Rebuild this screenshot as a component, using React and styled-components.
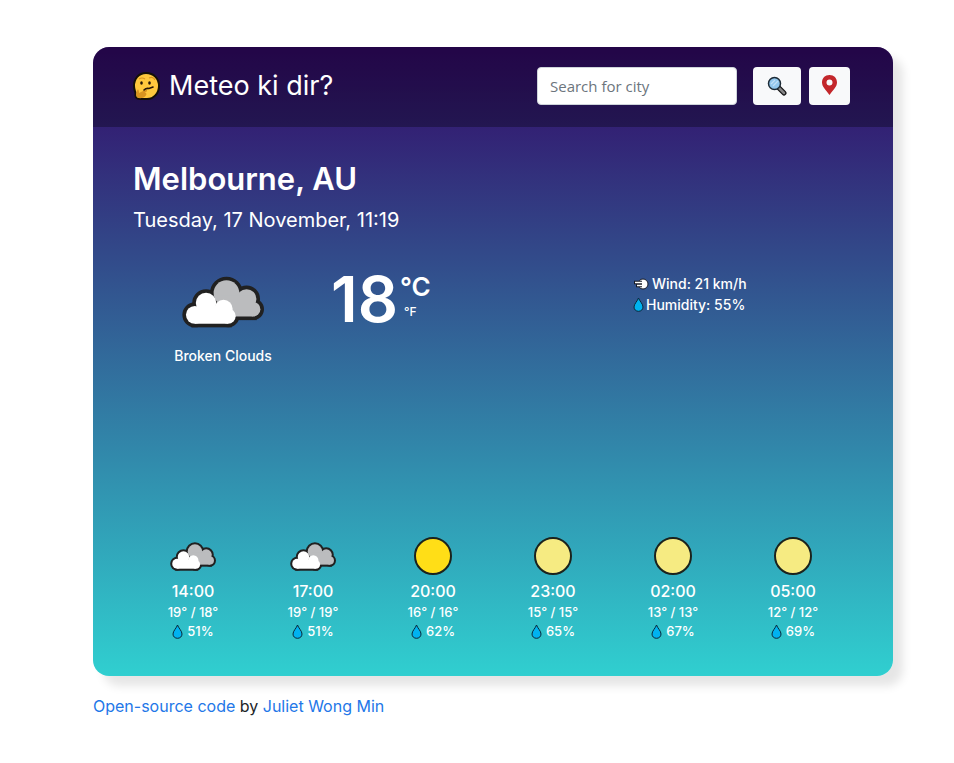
import React from "react";
import styled, { createGlobalStyle } from "styled-components";

const GlobalStyle = createGlobalStyle`
  *, *::before, *::after { box-sizing: border-box; }
  body {
    margin: 0;
    background: #fff;
    color: #212529;
    font-family: Inter, "Liberation Sans", sans-serif;
    font-size: 16px;
    line-height: 24px;
  }
  h1, h2, p, ul { margin: 0; padding: 0; }
`;

const Page = styled.div`
  max-width: 954px;
  padding: 47px 61px 40px 93px;
`;

const Card = styled.main`
  border-radius: 16px;
  overflow: hidden;
  color: #fff;
  background: linear-gradient(to top, #30cfd0 0%, #330867 100%);
  box-shadow: 10px 10px 10px rgba(0, 0, 0, 0.1);
`;

const Header = styled.header`
  display: flex;
  align-items: center;
  justify-content: space-between;
  gap: 24px;
  padding: 20px 43px 22px 38px;
  background: rgba(0, 0, 0, 0.3);
`;

const Brand = styled.h1`
  display: flex;
  align-items: center;
  gap: 8px;
  font-size: 27px;
  font-weight: 400;
  line-height: 38px;
  white-space: nowrap;
`;

const SearchForm = styled.form`
  display: flex;
  gap: 8px;
`;

const SearchInput = styled.input`
  width: 200px;
  height: 38px;
  margin-right: 8px;
  padding: 6px 12px;
  border: 1px solid #ced4da;
  border-radius: 4px;
  background: #fff;
  color: #495057;
  font: 400 15px/24px "Open Sans", "Noto Sans", sans-serif;
  &::placeholder { color: #6c757d; opacity: 1; }
`;

const IconButton = styled.button`
  display: flex;
  align-items: center;
  justify-content: center;
  height: 38px;
  padding: 0 ${(p) => (p.$wide ? 14 : 12)}px;
  border: 0;
  border-radius: 4px;
  background: #f8f9fa;
  cursor: pointer;
`;

const Content = styled.div`
  padding: 32px 40px 35px;
`;

const City = styled.h2`
  font-size: 31px;
  font-weight: 600;
  line-height: 40px;
`;

const DateLine = styled.p`
  margin-top: 8px;
  font-size: 20px;
  line-height: 26px;
`;

const Current = styled.section`
  display: grid;
  grid-template-columns: 3fr 5fr 4fr;
  margin-top: 34px;
`;

const Condition = styled.div`
  display: flex;
  flex-direction: column;
  align-items: center;
  gap: 16px;
  padding-top: 9px;
  font-size: 14px;
  font-weight: 500;
`;

const Temperature = styled.div`
  display: flex;
  align-items: flex-start;
  gap: 2px;
  padding-left: 18px;
`;

const Degrees = styled.strong`
  font-size: 63px;
  font-weight: 600;
  line-height: 64px;
`;

const Units = styled.div`
  display: flex;
  flex-direction: column;
  align-items: flex-start;
  padding-top: 4px;
`;

const UnitButton = styled.button`
  padding: 0 ${(p) => (p.$active ? 0 : 4)}px;
  border: 0;
  background: none;
  color: #fff;
  font-family: inherit;
  font-size: ${(p) => (p.$active ? 26 : 12)}px;
  font-weight: ${(p) => (p.$active ? 600 : 500)};
  line-height: ${(p) => (p.$active ? 32 : 18)}px;
  cursor: pointer;
`;

const Details = styled.ul`
  padding: 6px 0 0 20px;
  list-style: none;
  font-size: 14px;
  font-weight: 500;
  line-height: 21px;
`;

const Detail = styled.li`
  display: flex;
  align-items: center;
  gap: ${(p) => p.$gap}px;
  white-space: nowrap;
`;

const Forecast = styled.ul`
  display: grid;
  grid-template-columns: repeat(6, 1fr);
  margin-top: 165px;
  list-style: none;
`;

const Slot = styled.li`
  display: flex;
  flex-direction: column;
  align-items: center;
  font-size: 13px;
  font-weight: 500;
  line-height: 19px;
`;

const SlotIcon = styled.div`
  display: flex;
  align-items: center;
  height: 46px;
`;

const Time = styled.time`
  font-size: 16px;
  line-height: 24px;
`;

const Humidity = styled.p`
  display: flex;
  align-items: center;
  gap: 4px;
`;

const Footer = styled.footer`
  margin-top: 18px;
`;

const Link = styled.a`
  color: #2377e8;
  text-decoration: none;
  &:hover { text-decoration: underline; }
`;

function BackCloud(props) {
  return (
    <g {...props}>
      <circle cx="197" cy="82" r="39" />
      <circle cx="258" cy="100" r="30" />
      <circle cx="278" cy="131" r="22" />
      <rect x="180" y="90" width="98" height="63" />
    </g>
  );
}

function FrontCloud(props) {
  return (
    <g {...props}>
      <circle cx="101" cy="148" r="27" />
      <circle cx="135" cy="112" r="31" />
      <circle cx="188" cy="130" r="28" />
      <circle cx="202" cy="152" r="23" />
      <rect x="101" y="125" width="101" height="50" />
    </g>
  );
}

function Clouds({ width, height }) {
  return (
    <svg width={width} height={height} viewBox="62 31 249 156" aria-hidden="true">
      <BackCloud fill="#212121" stroke="#212121" strokeWidth="22" />
      <FrontCloud fill="#212121" stroke="#212121" strokeWidth="22" />
      <BackCloud fill="#bbbcbe" />
      <FrontCloud fill="#fff" />
    </svg>
  );
}

function Sun({ color }) {
  return (
    <svg width="40" height="40" viewBox="0 0 40 40" aria-hidden="true">
      <circle cx="20" cy="20" r="18" fill={color} stroke="#1b231d" strokeWidth="2" />
    </svg>
  );
}

function Drop() {
  return (
    <svg width="11" height="15" viewBox="0 0 11 15" aria-hidden="true">
      <path d="M5.5 1C4.5 4 1 7 1 10C1 12.600 3 14.300 5.500 14.300S10 12.600 10 10C10 7 6.500 4 5.500 1Z" fill="#00b2f0" stroke="#09283a" strokeWidth="1" />
    </svg>
  );
}

function WindIcon() {
  return (
    <svg width="16" height="14" viewBox="0 0 16 14" aria-hidden="true">
      <circle cx="10" cy="7" r="5" fill="#fff" stroke="#171b27" strokeWidth="1" />
      <path d="M1 5.500H9M3 8.500H9" stroke="#171b27" strokeWidth="3.500" />
      <path d="M2 5.500H10M4 8.500H10" stroke="#fff" strokeWidth="1.500" />
    </svg>
  );
}

function ThinkingFace() {
  return (
    <svg width="30" height="30" viewBox="0 0 28 30" aria-hidden="true">
      <path d="M14 2C6.500 2 2 8 2 15C2 18 3 20 3.500 22C3 26 4 28 8 28H15C22 28 27 22 27 15S22 2 14 2Z" fill="#ffc83d" stroke="#151007" strokeWidth="2" />
      <path d="M5 20C6 17 7 19 7 22L13 19C16 18 16 21 12 22C16 21 15 26 10 27C4 28 3 24 5 20Z" fill="#d99520" />
      <path d="M7 8Q10 6 13 8M17 7Q21 5 23 9" fill="none" stroke="#d99520" strokeWidth="1.200" />
      <ellipse cx="9.500" cy="12" rx="1.300" ry="1.800" fill="#251507" />
      <ellipse cx="17.500" cy="12" rx="1.300" ry="1.800" fill="#251507" />
      <path d="M12 19Q14 17 17 17.500L21 16" fill="none" stroke="#251507" strokeWidth="1.600" strokeLinecap="round" />
    </svg>
  );
}

function Magnifier() {
  return (
    <svg width="20" height="20" viewBox="0 0 20 20" aria-hidden="true">
      <path d="M11.500 11.500L17 17" stroke="#141414" strokeWidth="5" strokeLinecap="round" />
      <path d="M12 12L17 17" stroke="#858585" strokeWidth="2.500" strokeLinecap="round" />
      <circle cx="7.500" cy="7.500" r="6" fill="#92c8ef" stroke="#1d2b36" strokeWidth="1.500" />
      <path d="M4 8L8 4M6 10L11 5" stroke="#c2e0f7" strokeWidth="1.200" />
    </svg>
  );
}

function Pin() {
  return (
    <svg width="17" height="24" viewBox="0 0 17 24" aria-hidden="true">
      <path fillRule="evenodd" d="M8.500 1C4 1 1 4 1 8.500C1 13 5 16 8.500 21C12 16 16 13 16 8.500C16 4 13 1 8.500 1ZM8.500 5.500A3 3 0 1 1 8.500 11.500A3 3 0 1 1 8.500 5.500Z" fill="#c3272b" />
    </svg>
  );
}

const forecast = [
  { time: "14:00", temp: "19° / 18°", humidity: "51%", sky: "clouds" },
  { time: "17:00", temp: "19° / 19°", humidity: "51%", sky: "clouds" },
  { time: "20:00", temp: "16° / 16°", humidity: "62%", sky: "day" },
  { time: "23:00", temp: "15° / 15°", humidity: "65%", sky: "night" },
  { time: "02:00", temp: "13° / 13°", humidity: "67%", sky: "night" },
  { time: "05:00", temp: "12° / 12°", humidity: "69%", sky: "night" },
];

export default function App() {
  return (
    <Page>
      <GlobalStyle />
      <Card>
        <Header>
          <Brand><ThinkingFace />Meteo ki dir?</Brand>
          <SearchForm onSubmit={(e) => e.preventDefault()}>
            <SearchInput type="text" aria-label="Search for city" placeholder="Search for city" />
            <IconButton type="submit" aria-label="Search" $wide><Magnifier /></IconButton>
            <IconButton type="button" aria-label="Use my location"><Pin /></IconButton>
          </SearchForm>
        </Header>
        <Content>
          <City>Melbourne, AU</City>
          <DateLine>Tuesday, 17 November, 11:19</DateLine>
          <Current>
            <Condition>
              <Clouds width={82} height={52} />
              Broken Clouds
            </Condition>
            <Temperature>
              <Degrees>18</Degrees>
              <Units>
                <UnitButton type="button" $active>°C</UnitButton>
                <UnitButton type="button">°F</UnitButton>
              </Units>
            </Temperature>
            <Details>
              <Detail $gap={3}><WindIcon />Wind: 21 km/h</Detail>
              <Detail $gap={2}><Drop />Humidity: 55%</Detail>
            </Details>
          </Current>
          <Forecast>
            {forecast.map((slot) => (
              <Slot key={slot.time}>
                <SlotIcon>
                  {slot.sky === "clouds"
                    ? <Clouds width={46} height={29} />
                    : <Sun color={slot.sky === "day" ? "#ffde17" : "#f6eb82"} />}
                </SlotIcon>
                <Time>{slot.time}</Time>
                <p>{slot.temp}</p>
                <Humidity><Drop />{slot.humidity}</Humidity>
              </Slot>
            ))}
          </Forecast>
        </Content>
      </Card>
      <Footer>
        <Link href="#source">Open-source code</Link> by <Link href="#author">Juliet Wong Min</Link>
      </Footer>
    </Page>
  );
}
